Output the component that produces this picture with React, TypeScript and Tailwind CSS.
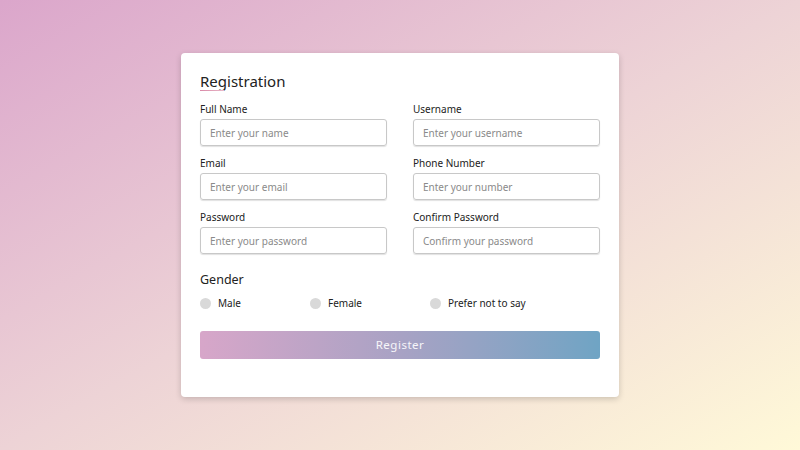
const fields = [
  { label: "Full Name", placeholder: "Enter your name" },
  { label: "Username", placeholder: "Enter your username" },
  { label: "Email", placeholder: "Enter your email" },
  { label: "Phone Number", placeholder: "Enter your number" },
  { label: "Password", placeholder: "Enter your password" },
  { label: "Confirm Password", placeholder: "Confirm your password" },
];

const genders = [
  { label: "Male", width: "w-[110px]" },
  { label: "Female", width: "w-[120px]" },
  { label: "Prefer not to say", width: "" },
];

export default function App() {
  return (
    <div
      className="w-[800px] h-[450px] flex items-start justify-center pt-[53px] bg-gradient-to-br from-[#dba6cb] via-[#edd3d6] to-[#fff9d8]"
      style={{ fontFamily: '"Noto Sans", "Open Sans", sans-serif' }}
    >
      <div className="w-[438px] h-[344px] bg-white rounded-[4px] shadow-[0_2px_6px_rgba(0,0,0,0.18)] px-[19px] pt-[16px]">
        {/* Title */}
        <div className="relative inline-block">
          <h1 className="text-[15px] leading-[22px] text-[#222]">Registration</h1>
          <div className="absolute left-0 bottom-[1px] w-[24px] h-[1px] bg-gradient-to-r from-[#d98aa8] to-[#e8b8c8]" />
        </div>

        {/* Fields */}
        <div className="grid grid-cols-2 gap-x-[26px] gap-y-[10px] mt-[9px]">
          {fields.map((f) => (
            <div key={f.label} className="flex flex-col">
              <label className="text-[10px] leading-[15px] text-[#222] mb-[2px]">{f.label}</label>
              <input
                placeholder={f.placeholder}
                className="h-[27px] w-full border border-[#c8c8c8] rounded-[3px] px-[9px] text-[10px] text-[#333] placeholder:text-[#8a8a8a] shadow-[0_1px_1px_rgba(0,0,0,0.12)] outline-none"
              />
            </div>
          ))}
        </div>

        {/* Gender */}
        <div className="mt-[17px]">
          <div className="text-[12.5px] leading-[18px] text-[#222]">Gender</div>
          <div className="flex items-center mt-[7px]">
            {genders.map((g) => (
              <label
                key={g.label}
                className={`${g.width} flex items-center gap-[7px] text-[10px] leading-[15px] text-[#222]`}
              >
                <span className="w-[11px] h-[11px] rounded-full bg-[#d9d9d9]" />
                {g.label}
              </label>
            ))}
          </div>
        </div>

        {/* Button */}
        <button className="mt-[20px] w-full h-[28px] rounded-[3px] text-white/90 text-[11.5px] tracking-[0.5px] bg-gradient-to-r from-[#d7a6c9] via-[#a8a2c4] to-[#6fa4c4]">
          Register
        </button>
      </div>
    </div>
  );
}
